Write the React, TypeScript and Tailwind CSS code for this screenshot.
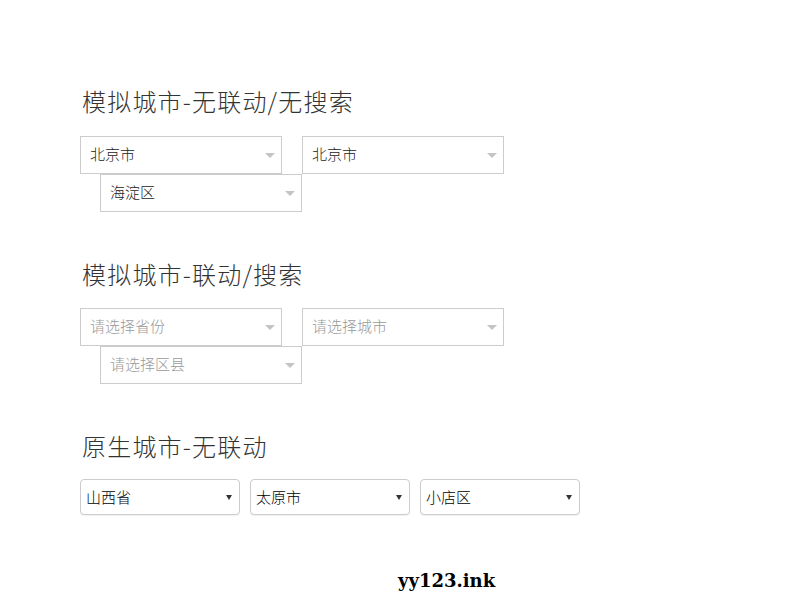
import React from "react";

const FONT = '"Noto Sans CJK SC", "Noto Sans", sans-serif';

function FakeSelect({ value, placeholder }: { value?: string; placeholder?: string }) {
  return (
    <div className="w-[202px] h-[38px] border border-[#cccccc] bg-white flex items-center justify-between pl-[9px] pr-[6px]">
      <span className={`text-[15px] leading-none mb-[3px] font-light ${value ? "text-[#222222]" : "text-[#999999]"}`}>
        {value ?? placeholder}
      </span>
      <svg width="10" height="5" viewBox="0 0 10 5" className="block">
        <polygon points="0,0 10,0 5,5" fill="#c4c4c4" />
      </svg>
    </div>
  );
}

function NativeSelect({ value }: { value: string }) {
  return (
    <div className="w-[160px] h-[36px] border border-[#cccccc] rounded-[4px] bg-white flex items-center justify-between pl-[5px] pr-[7px] shadow-[0_1px_1px_rgba(0,0,0,0.06)]">
      <span className="text-[15px] leading-none mb-[2px] font-light text-[#000000]">{value}</span>
      <svg width="6" height="5" viewBox="0 0 6 5" className="block">
        <polygon points="0,0 6,0 3,5" fill="#333333" />
      </svg>
    </div>
  );
}

function Heading({ children, className = "" }: { children: React.ReactNode; className?: string }) {
  return (
    <h2 className={`text-[24px] leading-[34px] tracking-[1.2px] font-light text-[#333333] pl-[2px] ${className}`}>
      {children}
    </h2>
  );
}

export default function App() {
  return (
    <div
      className="w-[800px] h-[600px] bg-white pl-[80px] pt-[84px] overflow-hidden"
      style={{ fontFamily: FONT }}
    >
      <Heading>模拟城市-无联动/无搜索</Heading>
      <div className="mt-[18px]">
        <div className="flex gap-[20px]">
          <FakeSelect value="北京市" />
          <FakeSelect value="北京市" />
        </div>
        <div className="pl-[20px]">
          <FakeSelect value="海淀区" />
        </div>
      </div>

      <Heading className="mt-[45px]">模拟城市-联动/搜索</Heading>
      <div className="mt-[17px]">
        <div className="flex gap-[20px]">
          <FakeSelect placeholder="请选择省份" />
          <FakeSelect placeholder="请选择城市" />
        </div>
        <div className="pl-[20px]">
          <FakeSelect placeholder="请选择区县" />
        </div>
      </div>

      <Heading className="mt-[45px]">原生城市-无联动</Heading>
      <div className="mt-[16px] flex gap-[10px]">
        <NativeSelect value="山西省" />
        <NativeSelect value="太原市" />
        <NativeSelect value="小店区" />
      </div>

      <div
        className="mt-[54px] pl-[318px] text-[18px] leading-[24px] font-bold text-black"
        style={{ fontFamily: '"DejaVu Serif", serif' }}
      >
        yy123.ink
      </div>
    </div>
  );
}
